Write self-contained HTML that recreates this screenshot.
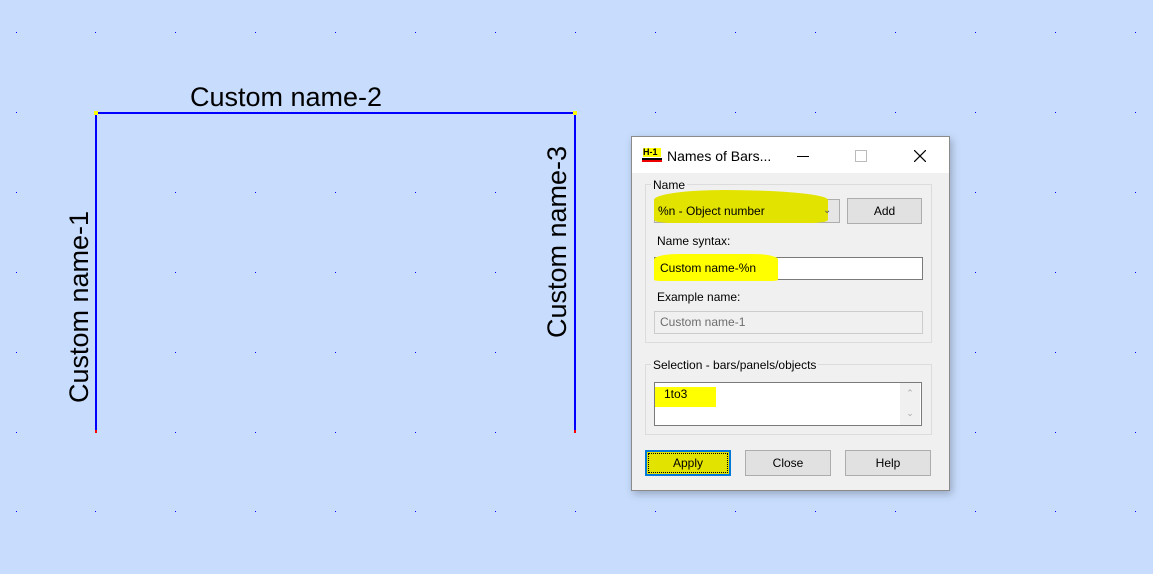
<!DOCTYPE html>
<html><head><style>
body{margin:0;width:1153px;height:574px;background:#c8ddfd;position:relative;overflow:hidden;font-family:"Liberation Sans",sans-serif}
.dlg{position:absolute;left:631px;top:136px;width:317px;height:353px;background:#f0f0f0;border:1px solid #8a8a8a;box-shadow:2px 3px 8px rgba(0,0,0,.25);font-size:12px;color:#000}
.tb{position:absolute;left:0;top:0;width:317px;height:36px;background:#fff}
.abs{position:absolute}
.grp{position:absolute;border:1px solid #dcdcdc}
.lbl{position:absolute;background:#f0f0f0;padding:0 2px}
.btn{position:absolute;background:#e1e1e1;border:1px solid #adadad;text-align:center;box-sizing:border-box;line-height:24px}
.inp{position:absolute;background:#fff;border:1px solid #7a7a7a;box-sizing:border-box}
</style></head><body>
<svg width="1153" height="574" style="position:absolute;left:0;top:0">
<g fill="#0000ff" id="dots"></g>
<line x1="96" y1="113" x2="575" y2="113" stroke="#0000ff" stroke-width="2"/>
<line x1="96" y1="113" x2="96" y2="432" stroke="#0000ff" stroke-width="2"/>
<line x1="575" y1="113" x2="575" y2="432" stroke="#0000ff" stroke-width="2"/>
<rect x="95" y="430" width="2" height="3" fill="#f00"/><rect x="574" y="430" width="2" height="3" fill="#f00"/>
<rect x="94" y="111" width="4" height="4" fill="#ff0"/><rect x="573" y="111" width="4" height="4" fill="#ff0"/>
<text x="286" y="106" font-size="27" text-anchor="middle" font-family="Liberation Sans">Custom name-2</text>
<text transform="translate(88,307) rotate(-90)" font-size="27" text-anchor="middle" font-family="Liberation Sans">Custom name-1</text>
<text transform="translate(566,242) rotate(-90)" font-size="27" text-anchor="middle" font-family="Liberation Sans">Custom name-3</text>
</svg>
<script>
var g=document.getElementById('dots'),s='';
for(var i=0;i<15;i++)for(var j=0;j<7;j++){var x=Math.round(15.5+79.95*i),y=Math.round(32+79.9*j);s+='<rect x="'+x+'" y="'+y+'" width="1" height="1"/>';}
g.innerHTML=s;
</script>
<div class="dlg">
 <div class="tb">
  <div class="abs" style="left:10px;top:11px;width:20px;height:14px">
   <div class="abs" style="left:1px;top:0;width:18px;height:9px;background:#ff0;font-size:9px;line-height:9px;font-weight:bold">H-1</div>
   <div class="abs" style="left:0;top:10px;width:20px;height:2px;background:#000"></div>
   <div class="abs" style="left:0;top:12px;width:20px;height:2px;background:#e00"></div>
  </div>
  <div class="abs" style="left:35px;top:11px;font-size:14px">Names of Bars...</div>
  <div class="abs" style="left:165px;top:19px;width:12px;height:1px;background:#000"></div>
  <div class="abs" style="left:223px;top:13px;width:10px;height:10px;border:1px solid #bbb"></div>
  <svg class="abs" style="left:282px;top:13px" width="12" height="12"><path d="M0 0L12 12M12 0L0 12" stroke="#000" stroke-width="1.2"/></svg>
 </div>
 <div class="grp" style="left:13px;top:47px;width:285px;height:157px"></div>
 <div class="lbl" style="left:19px;top:41px">Name</div>
 <div class="inp" style="left:22px;top:62px;width:186px;height:24px;border-color:#adadad;background:#e5e5e5"></div>
 <div class="abs" style="left:22px;top:53px;width:174px;height:33px;background:#e3e300;border-radius:40% 60% 10% 10%/30% 30% 10% 10%"></div>
 <div class="abs" style="left:26px;top:67px">%n - Object number</div>
 <div class="abs" style="left:191px;top:68px;font-size:10px;color:#555">&#8964;</div>
 <div class="btn" style="left:215px;top:61px;width:75px;height:26px">Add</div>
 <div class="abs" style="left:25px;top:97px">Name syntax:</div>
 <div class="inp" style="left:22px;top:120px;width:269px;height:23px"></div>
 <div class="abs" style="left:22px;top:117px;width:124px;height:27px;background:#ff0;border-radius:20% 20% 5% 5%"></div>
 <div class="abs" style="left:28px;top:124px">Custom name-%n</div>
 <div class="abs" style="left:25px;top:153px">Example name:</div>
 <div class="inp" style="left:22px;top:174px;width:269px;height:23px;border-color:#ccc;background:#f0f0f0"></div>
 <div class="abs" style="left:28px;top:178px;color:#6d6d6d">Custom name-1</div>
 <div class="grp" style="left:13px;top:227px;width:285px;height:69px"></div>
 <div class="lbl" style="left:19px;top:221px">Selection - bars/panels/objects</div>
 <div class="inp" style="left:22px;top:245px;width:268px;height:44px"></div>
 <div class="abs" style="left:23px;top:250px;width:61px;height:20px;background:#ff0"></div>
 <div class="abs" style="left:32px;top:250px">1to3</div>
 <div class="abs" style="left:268px;top:246px;width:20px;height:42px;background:#f0f0f0;color:#aaa;font-size:9px;text-align:center;line-height:20px">&#8963;<br>&#8964;</div>
 <div class="btn" style="left:13px;top:313px;width:86px;height:26px;background:#e3e300;border:2px solid #0078d7;outline:1px dotted #000;outline-offset:-4px;line-height:22px">Apply</div>
 <div class="btn" style="left:113px;top:313px;width:86px;height:26px">Close</div>
 <div class="btn" style="left:213px;top:313px;width:86px;height:26px">Help</div>
</div>
</body></html>
